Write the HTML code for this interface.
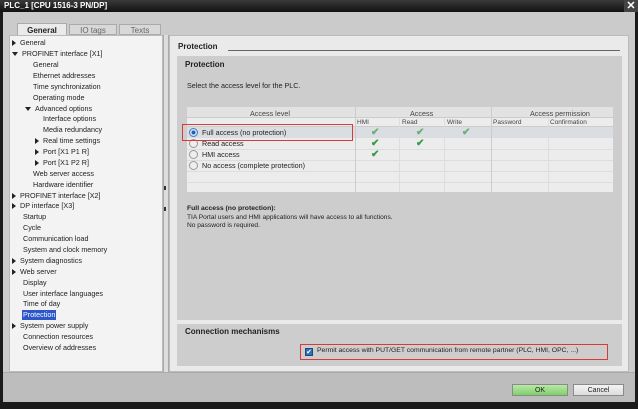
<!DOCTYPE html>
<html><head><style>
*{margin:0;padding:0;box-sizing:border-box}
body{width:638px;height:409px;overflow:hidden;background:#1a1a1a;font-family:"Liberation Sans",sans-serif;font-size:7.2px;color:#222;position:relative}
.a{position:absolute}
.nav div{position:absolute;height:11px;line-height:11px;white-space:nowrap}
.tri{display:inline-block;width:0;height:0;border-top:3px solid transparent;border-bottom:3px solid transparent;border-left:4px solid #222;margin-right:4px;vertical-align:-1px}
.dn{display:inline-block;width:0;height:0;border-left:3px solid transparent;border-right:3px solid transparent;border-top:4px solid #222;margin-right:4px;vertical-align:0}
.chk{color:#3a9a4a;font-size:10px;position:absolute;font-weight:bold}
.rad{display:inline-block;width:9px;height:9px;border-radius:50%;border:1px solid #999;background:#eee;vertical-align:-2px;margin-right:4px}
</style></head><body>
<div class="a" style="left:0;top:0;width:638px;height:12px;background:linear-gradient(#3a3a3a,#111)"></div>
<div class="a" style="left:4px;top:1px;color:#fff;font-weight:bold;font-size:8px">PLC_1 [CPU 1516-3 PN/DP]</div>
<div class="a" style="left:624px;top:0;width:14px;height:12px;background:#444;color:#fff;font-size:11px;font-weight:bold;text-align:center;line-height:12px">✕</div>
<div class="a" style="left:3px;top:12px;width:632px;height:390px;background:#cbcbcb"></div>
<div class="a" style="left:3px;top:372px;width:632px;height:30px;background:#bdbdbd;border-top:1px solid #aaa"></div>
<!-- tabs -->
<div class="a" style="left:17px;top:23px;width:50px;height:13px;background:#eaeaea;border:1px solid #aaa;border-bottom:none;font-weight:bold;font-size:8px;text-align:center;line-height:13px">General</div>
<div class="a" style="left:69px;top:24px;width:48px;height:11px;background:#d8d8d8;border:1px solid #aaa;color:#666;font-size:8px;text-align:center;line-height:11px">IO tags</div>
<div class="a" style="left:119px;top:24px;width:42px;height:11px;background:#d8d8d8;border:1px solid #aaa;color:#666;font-size:8px;text-align:center;line-height:11px">Texts</div>
<!-- left nav -->
<div class="a" style="left:9px;top:35px;width:154px;height:337px;background:#f3f3f3;border:1px solid #bbb"></div>
<div class="a" style="left:163px;top:35px;width:6px;height:337px;background:#ddd;border-left:1px solid #aaa;border-right:1px solid #aaa"></div>
<div class="a" style="left:164px;top:186px;width:2px;height:4px;background:#333"></div>
<div class="a" style="left:164px;top:207px;width:2px;height:4px;background:#333"></div>
<div class="nav">
<div style="left:12px;top:37px"><span class="tri"></span>General</div>
<div style="left:12px;top:48px"><span class="dn"></span>PROFINET interface [X1]</div>
<div style="left:33px;top:59px">General</div>
<div style="left:33px;top:70px">Ethernet addresses</div>
<div style="left:33px;top:81px">Time synchronization</div>
<div style="left:33px;top:92px">Operating mode</div>
<div style="left:25px;top:103px"><span class="dn"></span>Advanced options</div>
<div style="left:43px;top:113px">Interface options</div>
<div style="left:43px;top:124px">Media redundancy</div>
<div style="left:35px;top:135px"><span class="tri"></span>Real time settings</div>
<div style="left:35px;top:146px"><span class="tri"></span>Port [X1 P1 R]</div>
<div style="left:35px;top:157px"><span class="tri"></span>Port [X1 P2 R]</div>
<div style="left:33px;top:168px">Web server access</div>
<div style="left:33px;top:179px">Hardware identifier</div>
<div style="left:12px;top:190px"><span class="tri"></span>PROFINET interface [X2]</div>
<div style="left:12px;top:200px"><span class="tri"></span>DP interface [X3]</div>
<div style="left:23px;top:211px">Startup</div>
<div style="left:23px;top:222px">Cycle</div>
<div style="left:23px;top:233px">Communication load</div>
<div style="left:23px;top:244px">System and clock memory</div>
<div style="left:12px;top:255px"><span class="tri"></span>System diagnostics</div>
<div style="left:12px;top:266px"><span class="tri"></span>Web server</div>
<div style="left:23px;top:277px">Display</div>
<div style="left:23px;top:288px">User interface languages</div>
<div style="left:23px;top:298px">Time of day</div>
<div style="left:22px;top:310px;height:10px;line-height:10px;background:#2d56c8;color:#fff;padding:0 1px">Protection</div>
<div style="left:12px;top:320px"><span class="tri"></span>System power supply</div>
<div style="left:23px;top:331px">Connection resources</div>
<div style="left:23px;top:342px">Overview of addresses</div>
</div>
<!-- right panel -->
<div class="a" style="left:169px;top:35px;width:460px;height:337px;background:#eaeaea;border:1px solid #bbb"></div>
<div class="a" style="left:178px;top:42px;font-weight:bold;font-size:8px">Protection</div>
<div class="a" style="left:228px;top:50px;width:392px;height:1px;background:#666"></div>
<div class="a" style="left:177px;top:56px;width:445px;height:264px;background:#cdcdcd"></div>
<div class="a" style="left:185px;top:60px;font-weight:bold;font-size:8px">Protection</div>
<div class="a" style="left:187px;top:81px">Select the access level for the PLC.</div>
<!-- table -->
<div class="a" style="left:187px;top:107px;width:426px;height:85px;background:#ececec"></div>
<div class="a" style="left:187px;top:107px;width:426px;height:11px;background:#e2e2e2;border-bottom:1px solid #ccc"></div>
<div class="a" style="left:187px;top:118px;width:426px;height:9px;background:#ececec;border-bottom:1px solid #ccc"></div>
<div class="a" style="left:187px;top:127px;width:426px;height:11px;background:#dadde2"></div>
<div class="a" style="left:187px;top:149px;width:426px;height:1px;background:#ddd"></div>
<div class="a" style="left:187px;top:160px;width:426px;height:1px;background:#ddd"></div>
<div class="a" style="left:187px;top:171px;width:426px;height:1px;background:#ddd"></div>
<div class="a" style="left:187px;top:182px;width:426px;height:1px;background:#ddd"></div>
<div class="a" style="left:355px;top:107px;width:1px;height:85px;background:#ccc"></div>
<div class="a" style="left:399px;top:118px;width:1px;height:74px;background:#ddd"></div>
<div class="a" style="left:444px;top:118px;width:1px;height:74px;background:#ddd"></div>
<div class="a" style="left:491px;top:107px;width:1px;height:85px;background:#ccc"></div>
<div class="a" style="left:548px;top:118px;width:1px;height:74px;background:#ddd"></div>
<div class="a" style="left:250px;top:109px;color:#444">Access level</div>
<div class="a" style="left:410px;top:109px;color:#444">Access</div>
<div class="a" style="left:530px;top:109px;color:#444">Access permission</div>
<div class="a" style="left:357px;top:119px;font-size:6.5px;color:#444">HMI</div>
<div class="a" style="left:402px;top:119px;font-size:6.5px;color:#444">Read</div>
<div class="a" style="left:447px;top:119px;font-size:6.5px;color:#444">Write</div>
<div class="a" style="left:493px;top:119px;font-size:6.5px;color:#444">Password</div>
<div class="a" style="left:550px;top:119px;font-size:6.5px;color:#444">Confirmation</div>
<div class="a" style="left:189px;top:128px;line-height:10px"><span class="rad" style="background:radial-gradient(#1f5fb5 35%,#cfe0f5 45%);border-color:#4a7bc0"></span>Full access (no protection)</div>
<div class="a" style="left:189px;top:139px;line-height:10px"><span class="rad"></span>Read access</div>
<div class="a" style="left:189px;top:150px;line-height:10px"><span class="rad"></span>HMI access</div>
<div class="a" style="left:189px;top:161px;line-height:10px"><span class="rad"></span>No access (complete protection)</div>
<div class="a" style="left:182px;top:124px;width:171px;height:17px;border:1.5px solid #d63a3a"></div>
<div class="chk" style="left:371px;top:127px;opacity:.7">✔</div>
<div class="chk" style="left:416px;top:127px;opacity:.7">✔</div>
<div class="chk" style="left:462px;top:127px;opacity:.7">✔</div>
<div class="chk" style="left:371px;top:138px">✔</div>
<div class="chk" style="left:416px;top:138px">✔</div>
<div class="chk" style="left:371px;top:149px">✔</div>
<div class="a" style="left:187px;top:205px;font-weight:bold;font-size:6.8px">Full access (no protection):</div>
<div class="a" style="left:187px;top:214px;font-size:6.6px">TIA Portal users and HMI applications will have access to all functions.</div>
<div class="a" style="left:187px;top:222px;font-size:6.6px">No password is required.</div>
<!-- connection -->
<div class="a" style="left:177px;top:324px;width:445px;height:42px;background:#cdcdcd"></div>
<div class="a" style="left:185px;top:327px;font-weight:bold;font-size:8px">Connection mechanisms</div>
<div class="a" style="left:300px;top:344px;width:308px;height:16px;border:1.5px solid #d63a3a"></div>
<div class="a" style="left:305px;top:348px;width:8px;height:8px;background:#2e6fb8;border:1px solid #1a4a80;color:#fff;font-size:7px;line-height:7px;text-align:center">✔</div>
<div class="a" style="left:317px;top:347px;font-size:6.8px">Permit access with PUT/GET communication from remote partner (PLC, HMI, OPC, ...)</div>
<!-- buttons -->
<div class="a" style="left:512px;top:384px;width:56px;height:12px;background:linear-gradient(#b8e8a8,#7fcf6a);border:1px solid #8a8a8a;text-align:center;line-height:11px;font-size:7px">OK</div>
<div class="a" style="left:573px;top:384px;width:51px;height:12px;background:linear-gradient(#f4f4f4,#dcdcdc);border:1px solid #8a8a8a;text-align:center;line-height:11px;font-size:7px">Cancel</div>
</body></html>
